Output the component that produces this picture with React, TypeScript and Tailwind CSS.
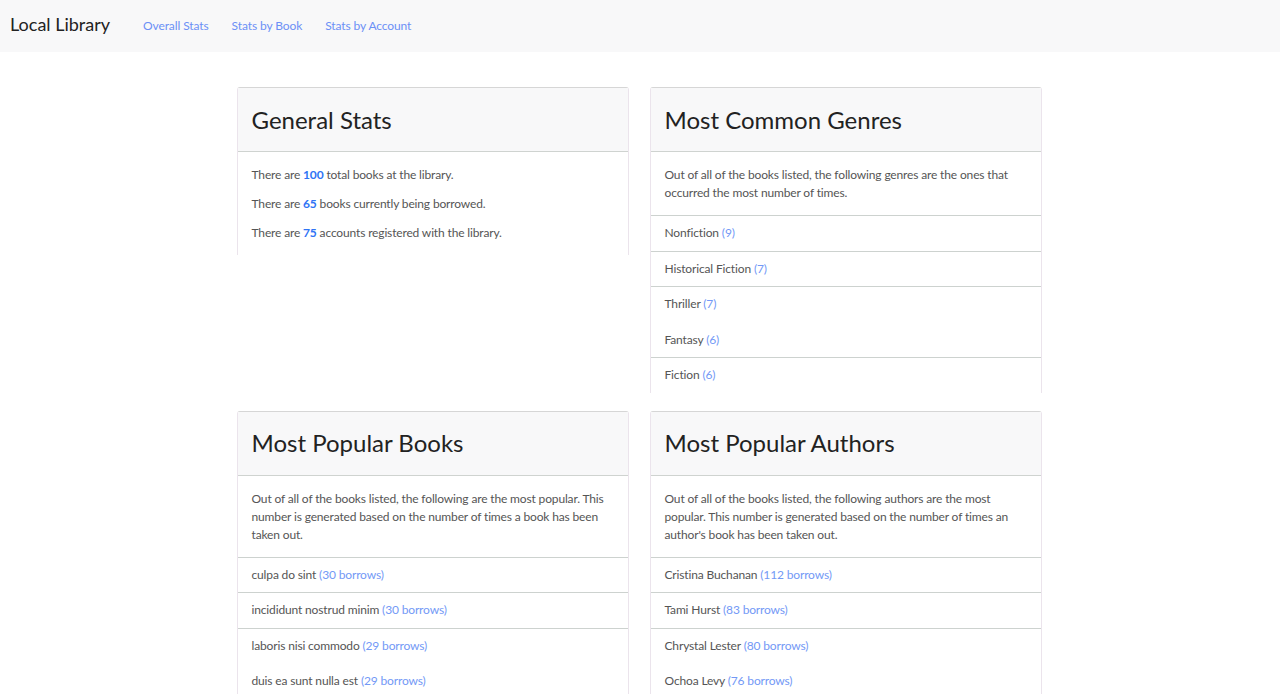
import React from "react";

type Entry = { name: string; count: string; noBorder?: boolean };

const genres: Entry[] = [
  { name: "Nonfiction", count: "(9)" },
  { name: "Historical Fiction", count: "(7)" },
  { name: "Thriller", count: "(7)" },
  { name: "Fantasy", count: "(6)", noBorder: true },
  { name: "Fiction", count: "(6)" },
];

const books: Entry[] = [
  { name: "culpa do sint", count: "(30 borrows)" },
  { name: "incididunt nostrud minim", count: "(30 borrows)" },
  { name: "laboris nisi commodo", count: "(29 borrows)" },
  { name: "duis ea sunt nulla est", count: "(29 borrows)", noBorder: true },
];

const authors: Entry[] = [
  { name: "Cristina Buchanan", count: "(112 borrows)" },
  { name: "Tami Hurst", count: "(83 borrows)" },
  { name: "Chrystal Lester", count: "(80 borrows)" },
  { name: "Ochoa Levy", count: "(76 borrows)", noBorder: true },
];

function Card({ title, children }: { title: string; children: React.ReactNode }) {
  return (
    <section className="border-x border-t border-[#ebe4ec] border-t-[#d6d6d6] rounded-t-[3px]">
      <header className="flex h-[64px] items-center border-b border-[#cfd3d0] bg-[#f8f8f9] px-[14px]">
        <h2 className="text-[24px] font-normal leading-none tracking-normal text-[#222]">{title}</h2>
      </header>
      {children}
    </section>
  );
}

function List({ items }: { items: Entry[] }) {
  return (
    <ul>
      {items.map((it) => (
        <li
          key={it.name}
          className={
            "px-[14px] py-[8.25px] text-[#555] " +
            (it.noBorder ? "border-t border-transparent" : "border-t border-[#cdd2cf]")
          }
        >
          {it.name} <span className="text-[#7399f6]">{it.count}</span>
        </li>
      ))}
    </ul>
  );
}

export default function App() {
  return (
    <div className="min-h-screen bg-white font-['Lato','Liberation_Sans',sans-serif] text-[12px] leading-[18px] tracking-[-0.15px]">
      <nav className="flex h-[52px] items-center bg-[#f8f8f9] px-[10px]">
        <span className="pb-[5px] text-[18px] leading-none tracking-normal text-[#222]">Local Library</span>
        <div className="ml-[33px] flex gap-[23px] text-[12px] tracking-[-0.1px] text-[#6c90f6]">
          <a href="#">Overall Stats</a>
          <a href="#">Stats by Book</a>
          <a href="#">Stats by Account</a>
        </div>
      </nav>

      <main className="mx-auto mt-[35px] grid w-[805px] -translate-x-[1px] grid-cols-2 items-start gap-x-[21px] gap-y-[18px]">
        <Card title="General Stats">
          <div className="space-y-[11px] px-[14px] pt-[14px] pb-[13px] text-[#555]">
            <p>
              There are <b className="font-bold text-[#2f74f5]">100</b> total books at the library.
            </p>
            <p>
              There are <b className="font-bold text-[#2f74f5]">65</b> books currently being borrowed.
            </p>
            <p>
              There are <b className="font-bold text-[#2f74f5]">75</b> accounts registered with the library.
            </p>
          </div>
        </Card>

        <Card title="Most Common Genres">
          <p className="px-[14px] pt-[14px] pb-[13px] text-[#555]">
            Out of all of the books listed, the following genres are the ones that occurred the most number of times.
          </p>
          <List items={genres} />
        </Card>

        <Card title="Most Popular Books">
          <p className="px-[14px] pt-[14px] pb-[13px] text-[#555]">
            Out of all of the books listed, the following are the most popular. This number is generated based on the
            number of times a book has been taken out.
          </p>
          <List items={books} />
        </Card>

        <Card title="Most Popular Authors">
          <p className="px-[14px] pt-[14px] pb-[13px] text-[#555]">
            Out of all of the books listed, the following authors are the most popular. This number is generated based
            on the number of times an author's book has been taken out.
          </p>
          <List items={authors} />
        </Card>
      </main>
    </div>
  );
}
